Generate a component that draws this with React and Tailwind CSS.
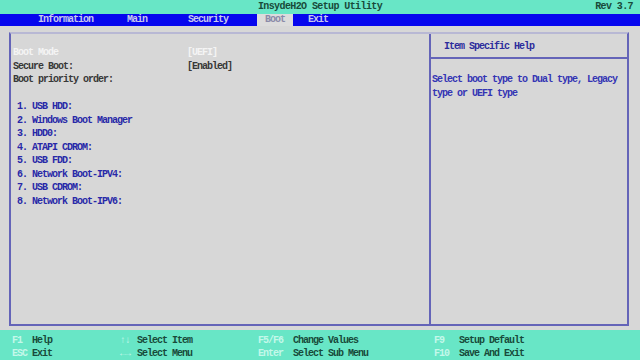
const font = { fontFamily: '"Liberation Mono", monospace' };

const bootOrder = [
  "1. USB HDD:",
  "2. Windows Boot Manager",
  "3. HDD0:",
  "4. ATAPI CDROM:",
  "5. USB FDD:",
  "6. Network Boot-IPV4:",
  "7. USB CDROM:",
  "8. Network Boot-IPV6:",
];

const keys = [
  ["F1", "Help", "\u2191\u2193", "Select Item", "F5/F6", "Change Values", "F9", "Setup Default"],
  ["ESC", "Exit", "\u2190\u2192", "Select Menu", "Enter", "Select Sub Menu", "F10", "Save And Exit"],
];

const App = () => {
  return (
    <div
      className="w-[640px] h-[360px] bg-[#d7d7d7] flex flex-col overflow-hidden font-bold text-[10px] tracking-[-1px]"
      style={font}
    >
      <div className="h-[14px] bg-[#68e6c6] grid grid-cols-[1fr_auto_1fr] items-center text-[#184a3a] leading-[14px] tracking-[-0.6px]">
        <div />
        <div>InsydeH2O Setup Utility</div>
        <div className="text-right pr-[7px]">Rev 3.7</div>
      </div>

      <div className="h-[12px] bg-[#0606ee] flex items-center text-[#c8c8ee] leading-[12px]">
        <span className="ml-[38px]">Information</span>
        <span className="ml-[34px]">Main</span>
        <span className="ml-[41px]">Security</span>
        <span className="ml-[29px] bg-[#dcdcdc] text-[#8a8aa8] px-[8px] h-[12px]">Boot</span>
        <span className="ml-[15px]">Exit</span>
      </div>

      <div className="flex-1 pl-[9px] pr-[11px] pt-[6px] pb-[4px]">
        <div className="h-full flex border-2 border-[#6464b8] border-t-[#b8b8d4]">
          <div className="w-[420px] border-r-2 border-[#6464b8] pt-[12px] pl-[2px] leading-[13.5px]">
            <div className="flex text-[#f4f4f4]">
              <span className="w-[174px]">Boot Mode</span>
              <span>[UEFI]</span>
            </div>
            <div className="flex text-[#383838]">
              <span className="w-[174px]">Secure Boot:</span>
              <span>[Enabled]</span>
            </div>
            <div className="text-[#383838]">Boot priority order:</div>
            <div className="h-[13.5px]" />
            <div className="pl-[4px] text-[#2828a8]">
              {bootOrder.map((item) => (
                <div key={item}>{item}</div>
              ))}
            </div>
          </div>

          <div className="flex-1 flex flex-col">
            <div className="h-[25px] pt-[1px] border-b-2 border-[#6464b8] flex items-center pl-[13px] text-[#2c2c9c]">
              Item Specific Help
            </div>
            <div className="pt-[14px] pl-[1px] leading-[14px] text-[#3434b4]">
              <div>Select boot type to Dual type, Legacy</div>
              <div>type or UEFI type</div>
            </div>
          </div>
        </div>
      </div>

      <div className="h-[30px] bg-[#68e6c6] pt-[4px] leading-[13px]">
        {keys.map((row) => (
          <div key={row[0]} className="flex">
            <span className="w-[32px] pl-[12px] text-[#c4f8ea]">{row[0]}</span>
            <span className="w-[88px] text-[#184a3a]">{row[1]}</span>
            <span className="w-[17px] text-[#c4f8ea]">{row[2]}</span>
            <span className="w-[121px] text-[#184a3a]">{row[3]}</span>
            <span className="w-[35px] text-[#c4f8ea]">{row[4]}</span>
            <span className="w-[141px] text-[#184a3a]">{row[5]}</span>
            <span className="w-[25px] text-[#c4f8ea]">{row[6]}</span>
            <span className="text-[#184a3a]">{row[7]}</span>
          </div>
        ))}
      </div>
    </div>
  );
};

export default App;
